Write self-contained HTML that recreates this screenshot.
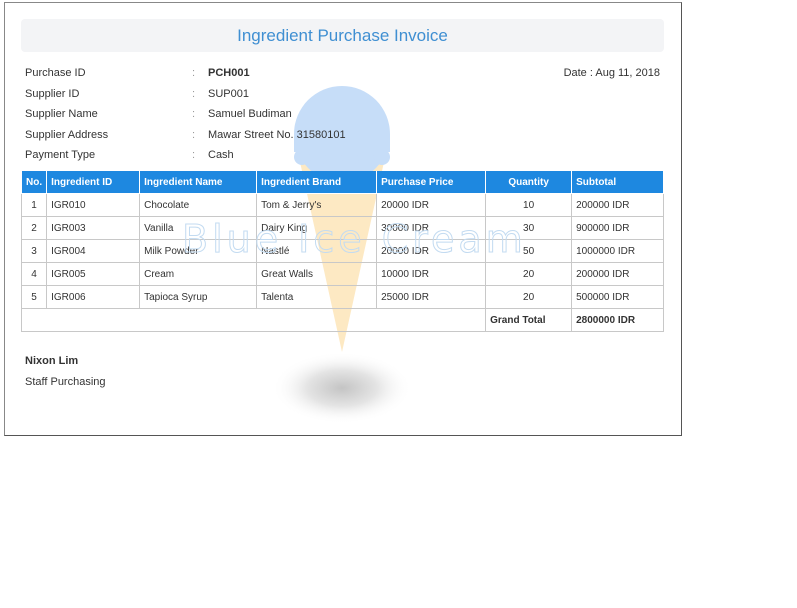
<!DOCTYPE html>
<html><head><style>
body{margin:0;background:#fff;font-family:"Liberation Sans",Arial,sans-serif;}
.frame{position:absolute;left:4px;top:2px;width:676px;height:432px;border:1px solid #555;border-top-color:#888;border-left-color:#888;}
.title{position:absolute;left:21px;top:19px;width:643px;height:33px;background:#f3f4f6;border-radius:4px;text-align:center;line-height:33px;color:#3f8fd2;font-size:17px;}
.info{position:absolute;font-size:11px;color:#333;}
.t{position:absolute;left:21px;top:171px;border-collapse:collapse;font-size:10px;color:#333;}
.t td,.t th{border:1px solid #c8c8c8;padding:0 4px;height:22px;text-align:left;}
.t th{background:#1e88e0;color:#fff;font-weight:bold;border-color:#fff;border-top:none;height:22px}
.c{text-align:center!important}
</style></head><body>
<div class="frame"></div>
<svg style="position:absolute;left:0;top:0" width="797" height="608">
<defs><radialGradient id="sh"><stop offset="0" stop-color="#c4c4c4"/><stop offset="0.5" stop-color="#e4e4e4"/><stop offset="1" stop-color="#fff" stop-opacity="0"/></radialGradient></defs>
<ellipse cx="342" cy="388" rx="70" ry="36" fill="url(#sh)"/>
<polygon points="300,162 384,162 342,352" fill="#fde9c3"/>
<circle cx="342" cy="134" r="48" fill="#c6ddf8"/>
<rect x="294" y="134" width="96" height="18" fill="#c6ddf8"/>
<g fill="#c6ddf8"><circle cx="302" cy="157" r="8"/><circle cx="318" cy="158" r="8"/><circle cx="334" cy="158" r="8"/><circle cx="350" cy="158" r="8"/><circle cx="366" cy="158" r="8"/><circle cx="382" cy="157" r="8"/></g>
</svg>
<div class="title">Ingredient Purchase Invoice</div>
<div class="info" style="left:25px;top:63px;line-height:20.5px">Purchase ID<br>Supplier ID<br>Supplier Name<br>Supplier Address<br>Payment Type</div>
<div class="info" style="left:192px;top:63px;line-height:20.5px;color:#999">:<br>:<br>:<br>:<br>:</div>
<div class="info" style="left:208px;top:63px;line-height:20.5px"><b>PCH001</b><br>SUP001<br>Samuel Budiman<br>Mawar Street No. 31580101<br>Cash</div>
<div class="info" style="right:137px;top:63px;line-height:20.5px">Date : Aug 11, 2018</div>
<table class="t">
<tr><th style="width:16px">No.</th><th style="width:84px">Ingredient ID</th><th style="width:108px">Ingredient Name</th><th style="width:111px">Ingredient Brand</th><th style="width:100px">Purchase Price</th><th class="c" style="width:77px">Quantity</th><th style="width:83px">Subtotal</th></tr>
<tr><td class="c">1</td><td>IGR010</td><td>Chocolate</td><td>Tom &amp; Jerry's</td><td>20000 IDR</td><td class="c">10</td><td>200000 IDR</td></tr>
<tr><td class="c">2</td><td>IGR003</td><td>Vanilla</td><td>Dairy King</td><td>30000 IDR</td><td class="c">30</td><td>900000 IDR</td></tr>
<tr><td class="c">3</td><td>IGR004</td><td>Milk Powder</td><td>Nastlé</td><td>20000 IDR</td><td class="c">50</td><td>1000000 IDR</td></tr>
<tr><td class="c">4</td><td>IGR005</td><td>Cream</td><td>Great Walls</td><td>10000 IDR</td><td class="c">20</td><td>200000 IDR</td></tr>
<tr><td class="c">5</td><td>IGR006</td><td>Tapioca Syrup</td><td>Talenta</td><td>25000 IDR</td><td class="c">20</td><td>500000 IDR</td></tr>
<tr><td colspan="5" style="border-right:1px solid #c8c8c8"></td><td><b>Grand Total</b></td><td><b>2800000 IDR</b></td></tr>
</table>
<div style="position:absolute;left:182px;top:217px;font-family:'DejaVu Sans',sans-serif;font-size:38px;color:transparent;-webkit-text-stroke:1px #c3dbf1;letter-spacing:4px;">Blue Ice Cream</div>
<div class="info" style="left:25px;top:355px"><b>Nixon Lim</b></div>
<div class="info" style="left:25px;top:376px">Staff Purchasing</div>
</body></html>
